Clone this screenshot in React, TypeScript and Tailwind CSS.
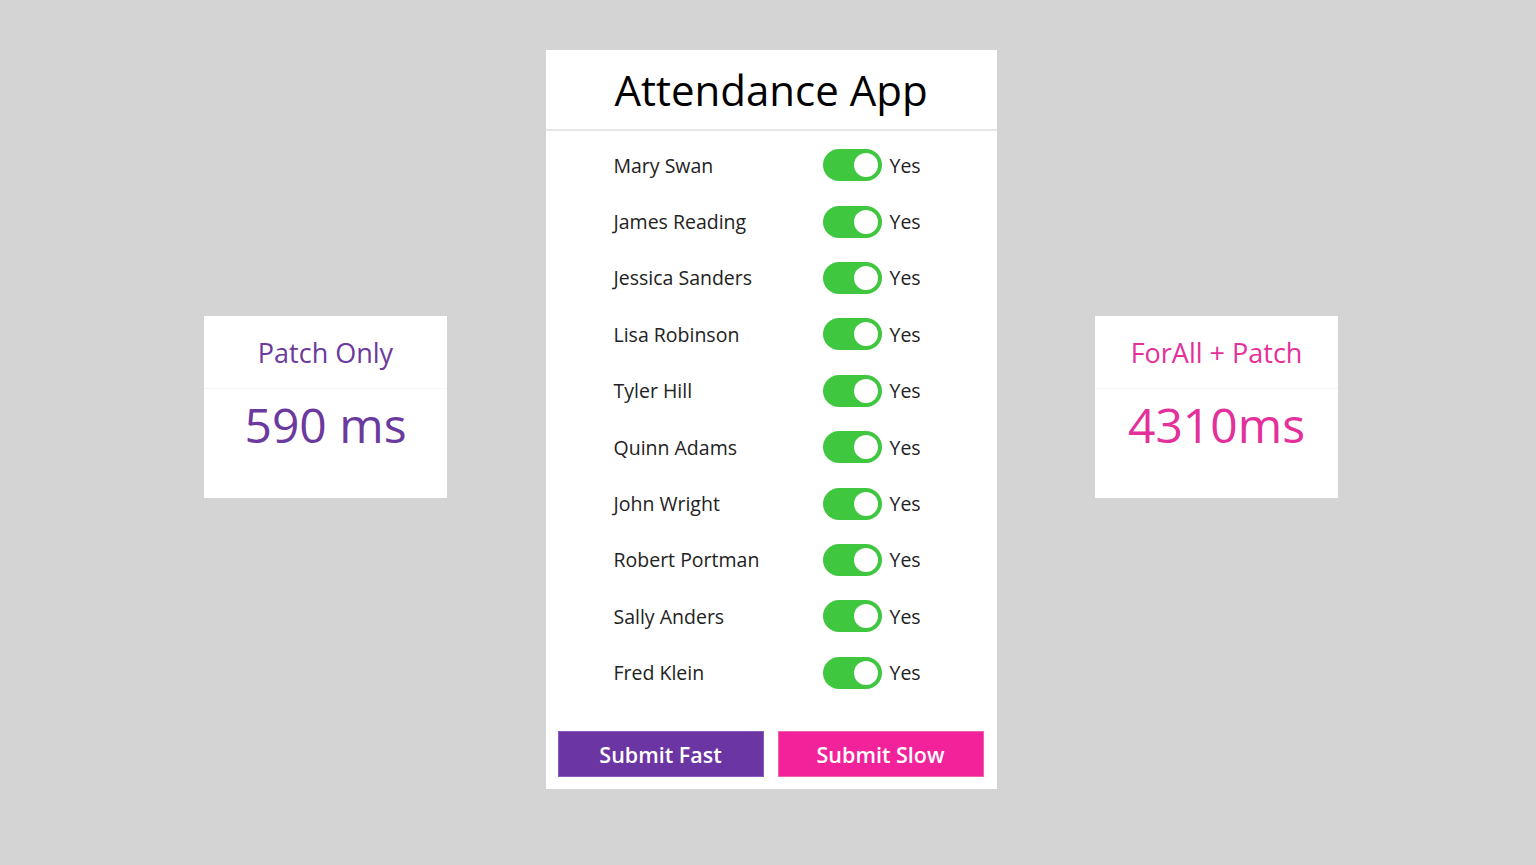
const students = [
  'Mary Swan',
  'James Reading',
  'Jessica Sanders',
  'Lisa Robinson',
  'Tyler Hill',
  'Quinn Adams',
  'John Wright',
  'Robert Portman',
  'Sally Anders',
  'Fred Klein',
];

function Toggle() {
  return (
    <div className="flex h-[32px] w-[59px] items-center justify-end rounded-full bg-[#3fc73f] pr-[4px]">
      <div className="h-[24px] w-[24px] rounded-full bg-white" />
    </div>
  );
}

function StatCard({ title, value, color }: { title: string; value: string; color: string }) {
  return (
    <div className="mt-[266px] flex h-[182px] w-[243px] flex-col bg-white">
      <div className={`flex h-[73px] items-center justify-center border-b border-[#f4f4f4] pt-[2px] text-[27px] ${color}`}>
        {title}
      </div>
      <div className={`flex h-[72px] items-center justify-center text-[48px] ${color}`}>{value}</div>
    </div>
  );
}

export default function App() {
  return (
    <div
      className="flex h-[865px] w-full items-start gap-[98.5px] bg-[#d4d4d4] pl-[204px] pt-[50px]"
      style={{ fontFamily: '"Open Sans", "Noto Sans", sans-serif' }}
    >
      <StatCard title="Patch Only" value="590 ms" color="text-[#6b3a9e]" />
      <div className="flex h-[739px] w-[451px] flex-col bg-white">
        <div className="flex h-[81px] items-center justify-center border-b-2 border-[#e6e6e6] text-[42px] text-black">
          Attendance App
        </div>
        <div className="flex flex-col pt-[6px]">
          {students.map((name) => (
            <div key={name} className="flex h-[56.4px] items-center pl-[68px]">
              <span className="w-[209px] text-[19.5px] text-[#222]">{name}</span>
              <Toggle />
              <span className="ml-[8px] text-[19.5px] text-[#222]">Yes</span>
            </div>
          ))}
        </div>
        <div className="mt-[30px] flex gap-[14px] px-[12px]">
          <button className="h-[46px] w-[206px] border border-[#8a5cc0] bg-[#6b35a3] pt-[3px] text-[21.5px] font-semibold text-white">
            Submit Fast
          </button>
          <button className="h-[46px] w-[206px] border border-[#f060b0] bg-[#f2229a] pt-[3px] text-[21.5px] font-semibold text-white">
            Submit Slow
          </button>
        </div>
      </div>
      <StatCard title="ForAll + Patch" value="4310ms" color="text-[#e3309a]" />
    </div>
  );
}
